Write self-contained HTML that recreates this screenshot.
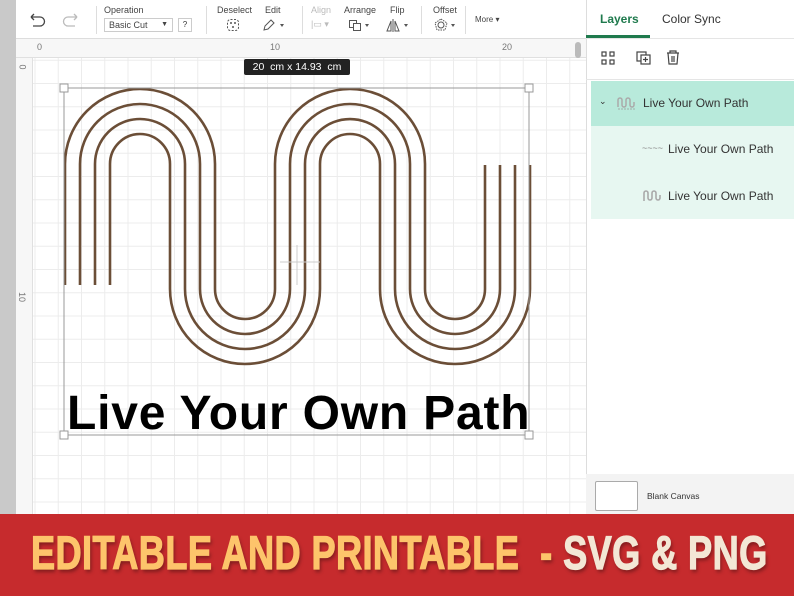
<!DOCTYPE html>
<html><head><meta charset="utf-8"><style>
*{margin:0;padding:0;box-sizing:border-box}
body{width:794px;height:596px;overflow:hidden;background:#fff;font-family:"Liberation Sans",sans-serif;position:relative;color:#333}
.abs{position:absolute}
.lbl{font-size:9px;color:#444;position:absolute}
.gray{color:#bbb}
</style></head><body>
<div class="abs" style="left:0;top:0;width:16px;height:514px;background:#c9c9c9"></div>
<div class="abs" style="left:16px;top:0;width:570px;height:39px;background:#fff;border-bottom:1px solid #ddd"></div>
<svg class="abs" style="left:28px;top:13px" width="52" height="16" viewBox="0 0 52 16"><path d="M3 4h9a4.5 4.5 0 0 1 0 9H5M3 4l3-3M3 4l3 3" fill="none" stroke="#444" stroke-width="1.3"/><path d="M49 4h-9a4.5 4.5 0 0 0 0 9h7M49 4l-3-3M49 4l-3 3" fill="none" stroke="#bbb" stroke-width="1.3"/></svg>
<div class="abs" style="left:96px;top:6px;width:1px;height:28px;background:#ddd"></div>
<div class="lbl" style="left:104px;top:5px">Operation</div>
<div class="abs" style="left:104px;top:18px;width:69px;height:14px;border:1px solid #ccc;font-size:9px;padding:1px 4px;color:#444">Basic Cut<span style="position:absolute;right:4px;font-size:7px;top:2px">▼</span></div>
<div class="abs" style="left:178px;top:18px;width:14px;height:14px;border:1px solid #ccc;font-size:8px;text-align:center;line-height:12px">?</div>
<div class="abs" style="left:206px;top:6px;width:1px;height:28px;background:#ddd"></div>
<div class="lbl" style="left:217px;top:5px">Deselect</div>
<svg class="abs" style="left:226px;top:18px" width="14" height="14"><rect x="1.5" y="1.5" width="11" height="11" rx="3" fill="none" stroke="#555" stroke-dasharray="2 1.5"/><circle cx="5" cy="5" r="1" fill="#555"/><circle cx="9" cy="5" r="1" fill="#555"/><circle cx="7" cy="9" r="1" fill="#555"/></svg>
<div class="lbl" style="left:265px;top:5px">Edit</div>
<svg class="abs" style="left:262px;top:18px" width="24" height="14"><path d="M2 12l1-4 6-6 3 3-6 6z" fill="none" stroke="#555"/><path d="M18 6l2 3 2-3z" fill="#555"/></svg>
<div class="abs" style="left:302px;top:6px;width:1px;height:28px;background:#ddd"></div>
<div class="lbl gray" style="left:311px;top:5px">Align</div>
<div class="lbl gray" style="left:311px;top:19px">|▭ ▾</div>
<div class="lbl" style="left:344px;top:5px">Arrange</div>
<svg class="abs" style="left:348px;top:18px" width="24" height="14"><rect x="1.5" y="2.5" width="7" height="7" fill="none" stroke="#555"/><rect x="5.5" y="5.5" width="7" height="7" fill="#fff" stroke="#555"/><path d="M17 6l2 3 2-3z" fill="#555"/></svg>
<div class="lbl" style="left:390px;top:5px">Flip</div>
<svg class="abs" style="left:386px;top:18px" width="26" height="14"><path d="M7 1v13M5 3L1 13h4zM9 3l4 10H9z" fill="none" stroke="#555"/><path d="M18 6l2 3 2-3z" fill="#555"/></svg>
<div class="abs" style="left:421px;top:6px;width:1px;height:28px;background:#ddd"></div>
<div class="lbl" style="left:433px;top:5px">Offset</div>
<svg class="abs" style="left:434px;top:18px" width="26" height="14"><path d="M7 1l6 4-2 7H3L1 5z" fill="none" stroke="#555" stroke-dasharray="1.5 1"/><circle cx="7" cy="7" r="3" fill="none" stroke="#555"/><path d="M17 6l2 3 2-3z" fill="#555"/></svg>
<div class="abs" style="left:465px;top:6px;width:1px;height:28px;background:#ddd"></div>
<div class="lbl" style="left:475px;top:15px;font-size:8px">More ▾</div>
<div class="abs" style="left:16px;top:39px;width:570px;height:19px;background:#f7f7f7;border-bottom:1px solid #e0e0e0"></div>
<div class="lbl" style="left:37px;top:42px;color:#777">0</div>
<div class="lbl" style="left:270px;top:42px;color:#777">10</div>
<div class="lbl" style="left:502px;top:42px;color:#777">20</div>
<div class="abs" style="left:575px;top:42px;width:6px;height:16px;background:#bbb;border-radius:3px"></div>
<div class="abs" style="left:16px;top:58px;width:17px;height:456px;background:#f7f7f7;border-right:1px solid #e0e0e0"></div>
<div class="lbl" style="left:20px;top:62px;color:#777;transform:rotate(90deg)">0</div>
<div class="lbl" style="left:17px;top:292px;color:#777;transform:rotate(90deg)">10</div>
<div class="abs" style="left:33px;top:58px;width:553px;height:456px;background-image:linear-gradient(to right,#ececec 1px,transparent 1px),linear-gradient(to bottom,#ececec 1px,transparent 1px);background-size:23.25px 23.25px;background-position:1.5px 1.75px"></div>
<svg class="abs" style="left:0;top:0" width="586" height="514">
<g fill="none" stroke="#6b4e37" stroke-width="2.6">
<path d="M65 285V164A75 75 0 0 1 215 164V289A30 30 0 0 0 275 289V164A75 75 0 0 1 425 164V289A30 30 0 0 0 485 289V165"/>
<path d="M80 285V164A60 60 0 0 1 200 164V289A45 45 0 0 0 290 289V164A60 60 0 0 1 410 164V289A45 45 0 0 0 500 289V165"/>
<path d="M95 285V164A45 45 0 0 1 185 164V289A60 60 0 0 0 305 289V164A45 45 0 0 1 395 164V289A60 60 0 0 0 515 289V165"/>
<path d="M110 285V164A30 30 0 0 1 170 164V289A75 75 0 0 0 320 289V164A30 30 0 0 1 380 164V289A75 75 0 0 0 530 289V165"/>
</g>
<rect x="64" y="88" width="465" height="347" fill="none" stroke="#999" stroke-width="1"/>
<g fill="#fff" stroke="#999"><rect x="60" y="84" width="8" height="8"/><rect x="525" y="84" width="8" height="8"/><rect x="60" y="431" width="8" height="8"/><rect x="525" y="431" width="8" height="8"/></g>
<path d="M297 245v40M280 262h40" stroke="#ccc"/>
</svg>
<div class="abs" style="left:244px;top:59px;width:106px;height:16px;background:#222;color:#fff;font-size:10.5px;text-align:center;line-height:16px;border-radius:2px">20 &nbsp;cm x 14.93 &nbsp;cm</div>
<div class="abs" style="left:67px;top:386px;font-size:48px;font-weight:bold;color:#000;letter-spacing:0.8px;white-space:nowrap">Live Your Own Path</div>
<div class="abs" style="left:586px;top:0;width:208px;height:514px;background:#fff;border-left:1px solid #ddd"></div>
<div class="abs" style="left:600px;top:12px;font-size:12px;color:#1f7a4d;font-weight:bold">Layers</div>
<div class="abs" style="left:586px;top:35px;width:64px;height:3px;background:#1f7a4d"></div>
<div class="abs" style="left:662px;top:12px;font-size:12px;color:#333">Color Sync</div>
<div class="abs" style="left:586px;top:38px;width:208px;height:1px;background:#e5e5e5"></div>
<svg class="abs" style="left:600px;top:49px" width="90" height="18"><g fill="none" stroke="#444" stroke-width="1.2"><rect x="2" y="3" width="4" height="4"/><rect x="10" y="3" width="4" height="4"/><rect x="2" y="11" width="4" height="4"/><rect x="10" y="11" width="4" height="4"/><rect x="37" y="3" width="9" height="9"/><rect x="41" y="6" width="9" height="9" fill="#fff"/><path d="M45.5 8v5M43 10.5h5M67 4h12M70 4V2h6v2M68 4l1 11h8l1-11M72 7v6M74 7v6"/></g></svg>
<div class="abs" style="left:586px;top:79px;width:208px;height:1px;background:#e5e5e5"></div>
<div class="abs" style="left:591px;top:81px;width:203px;height:45px;background:#b8eadb"></div>
<div class="abs" style="left:591px;top:126px;width:203px;height:93px;background:#e7f7f1"></div>
<div class="abs" style="left:599px;top:96px;font-size:9px;color:#333">⌄</div>
<svg class="abs" style="left:616px;top:95px" width="22" height="16"><path d="M2 12V5a2 2 0 0 1 4 0v5a2 2 0 0 0 4 0V5a2 2 0 0 1 4 0v5a2 2 0 0 0 4 0V7" fill="none" stroke="#aaa" stroke-width="1.5"/><path d="M2 14h17" stroke="#999" stroke-width="0.8" stroke-dasharray="2 1"/></svg>
<div class="abs" style="left:643px;top:96px;font-size:12px;color:#333">Live Your Own Path</div>
<div class="abs" style="left:642px;top:143px;font-size:9px;color:#888">~~~~</div>
<div class="abs" style="left:668px;top:142px;font-size:12px;color:#333">Live Your Own Path</div>
<svg class="abs" style="left:642px;top:188px" width="22" height="16"><path d="M2 13V5a2 2 0 0 1 4 0v5a2 2 0 0 0 4 0V5a2 2 0 0 1 4 0v5a2 2 0 0 0 4 0V7" fill="none" stroke="#aaa" stroke-width="1.6"/></svg>
<div class="abs" style="left:668px;top:189px;font-size:12px;color:#333">Live Your Own Path</div>
<div class="abs" style="left:586px;top:474px;width:208px;height:40px;background:#f3f3f3"></div>
<div class="abs" style="left:595px;top:481px;width:43px;height:30px;background:#fff;border:1px solid #aaa;border-radius:2px"></div>
<div class="abs" style="left:647px;top:491px;font-size:8.5px;color:#333">Blank Canvas</div>
<div class="abs" style="left:0;top:514px;width:794px;height:82px;background:#c62b2d"></div>
<div class="abs" style="left:31px;top:528px;width:780px;height:50px;white-space:nowrap;font-weight:bold;font-size:47px;line-height:50px;transform:scaleX(0.77);transform-origin:left top;text-shadow:2px 3px 4px rgba(0,0,0,.35);letter-spacing:0.5px;-webkit-text-stroke:1.2px currentColor"><span style="color:#fdc46b">EDITABLE AND PRINTABLE &nbsp;- </span><span style="color:#f3e7d5">SVG &amp; PNG</span></div>
</body></html>
